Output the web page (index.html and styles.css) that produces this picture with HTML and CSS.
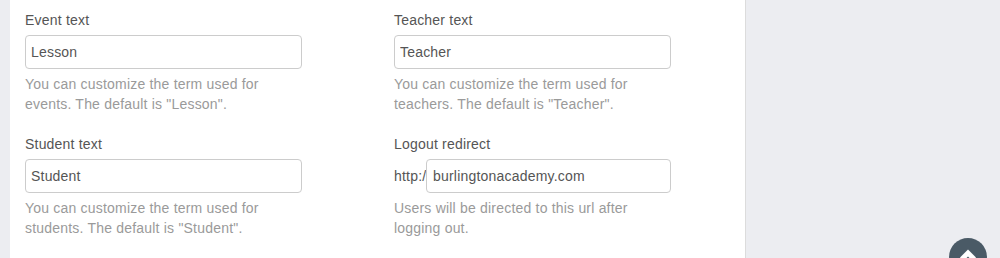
FILE: index.html
```html
<!DOCTYPE html>
<html>
<head>
<meta charset="utf-8">
<link rel="stylesheet" href="styles.css">
</head>
<body>
<div class="strip"></div>
<main class="panel">
  <div class="form-grid">
    <div class="form-group">
      <label class="label">Event text</label>
      <input class="input" type="text" value="Lesson">
      <p class="help">You can customize the term used for events. The default is "Lesson".</p>
    </div>
    <div class="form-group">
      <label class="label">Teacher text</label>
      <input class="input" type="text" value="Teacher">
      <p class="help">You can customize the term used for teachers. The default is "Teacher".</p>
    </div>
    <div class="form-group">
      <label class="label">Student text</label>
      <input class="input" type="text" value="Student">
      <p class="help">You can customize the term used for students. The default is "Student".</p>
    </div>
    <div class="form-group">
      <label class="label">Logout redirect</label>
      <div class="url-row">
        <span class="prefix">http://</span>
        <input class="input url-input" type="text" value="burlingtonacademy.com">
      </div>
      <p class="help">Users will be directed to this url after logging out.</p>
    </div>
  </div>
</main>
<div class="side"></div>
<a class="to-top" href="#">
  <svg width="38" height="38" viewBox="0 0 38 38"><path d="M11 19.5 L19 11.5 L27 19.5 L23.5 23 L19 18.5 L14.5 23 Z" fill="#fff"/></svg>
</a>
</body>
</html>
```

FILE: styles.css
```css
html, body {
  margin: 0;
  padding: 0;
  height: 100%;
}
body {
  display: flex;
  background: #ecedf1;
  font-family: "Liberation Sans", Arial, Helvetica, sans-serif;
  font-size: 14px;
  line-height: 20px;
  letter-spacing: 0.2px;
  overflow: hidden;
}
.strip {
  width: 10px;
  flex: none;
}
.panel {
  width: 736px;
  flex: none;
  background: #fff;
  border-right: 1px solid #dcdcdc;
  padding: 10px 0 0 15px;
  min-height: 100vh;
  box-sizing: border-box;
}
.side {
  flex: 1;
}
.form-grid {
  display: grid;
  grid-template-columns: 277px 277px;
  column-gap: 92px;
  row-gap: 20px;
}
.form-group {
  display: flex;
  flex-direction: column;
}
.label {
  color: #555;
  height: 20px;
  margin-bottom: 5px;
}
.input {
  box-sizing: border-box;
  height: 34px;
  width: 277px;
  border: 1px solid #ccc;
  border-radius: 4px;
  padding: 6px 5px;
  font-family: inherit;
  font-size: 14px;
  letter-spacing: 0.2px;
  color: #555;
  background: #fff;
  margin: 0;
  outline: none;
}
.url-row {
  display: flex;
  align-items: center;
}
.prefix {
  width: 32px;
  overflow: hidden;
  white-space: nowrap;
  color: #555;
  flex: none;
}
.url-input {
  width: 245px;
  padding-left: 6px;
}
.help {
  margin: 5px 0 0;
  color: #9a9a9a;
  height: 40px;
}
.to-top {
  position: fixed;
  left: 949px;
  top: 238px;
  width: 38px;
  height: 38px;
  border-radius: 50%;
  background: #4a5a66;
  display: block;
}
.to-top svg {
  display: block;
}
```
